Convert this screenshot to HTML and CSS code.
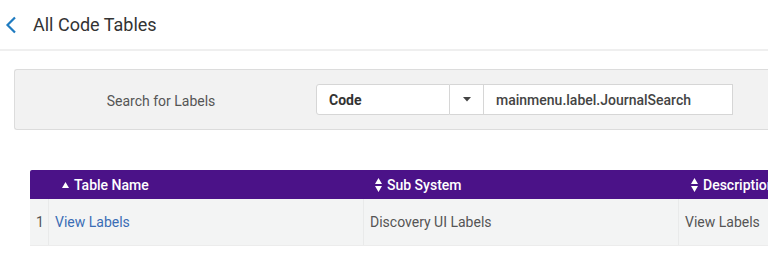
FILE: index.html
```html
<!DOCTYPE html>
<html>
<head>
<meta charset="utf-8">
<link rel="stylesheet" href="styles.css">
</head>
<body>
<div class="page">
  <header class="topbar">
    <svg class="back" width="12" height="18" viewBox="0 0 12 18"><path d="M10 1.5 L2.5 9 L10 16.5" fill="none" stroke="#1f7bc0" stroke-width="2.2"/></svg>
    <h1 class="title">All Code Tables</h1>
  </header>
  <div class="content">
    <section class="search">
      <div class="search-label">Search for Labels</div>
      <div class="search-controls">
        <div class="select">Code</div>
        <div class="caret"><svg width="8" height="5" viewBox="0 0 8 5"><path d="M0 0 H8 L4 4.5 Z" fill="#444"/></svg></div>
        <div class="input">mainmenu.label.JournalSearch</div>
      </div>
    </section>
    <div class="table">
      <div class="thead">
        <div class="cell num"></div>
        <div class="cell c1"><svg class="sort" width="7" height="6" viewBox="0 0 7 6"><path d="M0 6 H7 L3.5 0 Z" fill="#fff"/></svg>Table Name</div>
        <div class="cell c2"><svg class="sort" width="7" height="14" viewBox="0 0 7 14"><path d="M0 6 H7 L3.5 0 Z M0 8 H7 L3.5 14 Z" fill="#fff"/></svg>Sub System</div>
        <div class="cell c3"><svg class="sort" width="7" height="14" viewBox="0 0 7 14"><path d="M0 6 H7 L3.5 0 Z M0 8 H7 L3.5 14 Z" fill="#fff"/></svg>Description</div>
      </div>
      <div class="trow">
        <div class="cell num">1</div>
        <div class="cell c1"><a class="link">View Labels</a></div>
        <div class="cell c2">Discovery UI Labels</div>
        <div class="cell c3">View Labels</div>
      </div>
    </div>
  </div>
</div>
</body>
</html>
```

FILE: styles.css
```css
html, body {
  margin: 0;
  padding: 0;
  overflow: hidden;
  background: #fff;
}
body {
  font-family: Roboto, "Liberation Sans", sans-serif;
  width: 768px;
  height: 261px;
}
.page {
  width: 768px;
  overflow: hidden;
}
.topbar {
  display: flex;
  align-items: center;
  height: 49px;
  border-bottom: 2px solid #efefef;
  box-sizing: content-box;
}
.back {
  margin-left: 5px;
}
.title {
  margin: 0 0 0 16px;
  font-size: 18px;
  font-weight: 400;
  color: #333;
}
.content {
  padding: 18px 0 0 14px;
  overflow: hidden;
}
.search {
  display: flex;
  align-items: center;
  height: 59px;
  width: 760px;
  background: #f2f2f2;
  border: 1px solid #dcdcdc;
  border-right: none;
  border-radius: 3px 0 0 3px;
  box-sizing: content-box;
}
.search-label {
  width: 290px;
  padding-left: 1px;
  padding-top: 3px;
  text-align: center;
  font-size: 14px;
  color: #555;
}
.search-controls {
  display: flex;
  margin-left: 10px;
  height: 31px;
}
.select {
  width: 120px;
  padding-left: 12px;
  display: flex;
  align-items: center;
  background: #fff;
  border: 1px solid #d6d6d6;
  border-radius: 3px 0 0 3px;
  font-size: 14px;
  font-weight: 700;
  color: #333;
}
.caret {
  width: 33px;
  display: flex;
  align-items: center;
  justify-content: center;
  background: #fff;
  border-top: 1px solid #d6d6d6;
  border-bottom: 1px solid #d6d6d6;
}
.input {
  width: 236px;
  padding-left: 12px;
  display: flex;
  align-items: center;
  background: #fff;
  border: 1px solid #d6d6d6;
  font-size: 14px;
  font-weight: 500;
  color: #444;
}
.table {
  margin: 40px 0 0 16px;
  width: 738px;
  overflow: hidden;
  font-size: 14px;
}
.thead {
  display: flex;
  height: 29px;
  background: #4b1288;
  color: #fff;
  font-weight: 500;
  border-radius: 2px 0 0 0;
}
.trow {
  display: flex;
  height: 46px;
  background: #f3f4f4;
  color: #555;
  border-bottom: 1px solid #ececec;
}
.cell {
  display: flex;
  align-items: center;
  box-sizing: border-box;
  white-space: nowrap;
  flex-shrink: 0;
}
.num {
  width: 18px;
  justify-content: center;
  padding-left: 2px;
}
.c1 { width: 315px; }
.c2 { width: 315px; }
.c3 { width: 120px; }
.trow .cell + .cell { border-left: 1px solid #e9eaea; }
.thead .c1 { padding-left: 14px; }
.thead .c2 { padding-left: 12px; }
.thead .c3 { padding-left: 13px; }
.trow .c1 { padding-left: 6px; }
.trow .c2 { padding-left: 6px; }
.trow .c3 { padding-left: 6px; }
.sort {
  margin-right: 5px;
}
.link {
  color: #3a6db5;
}
```
